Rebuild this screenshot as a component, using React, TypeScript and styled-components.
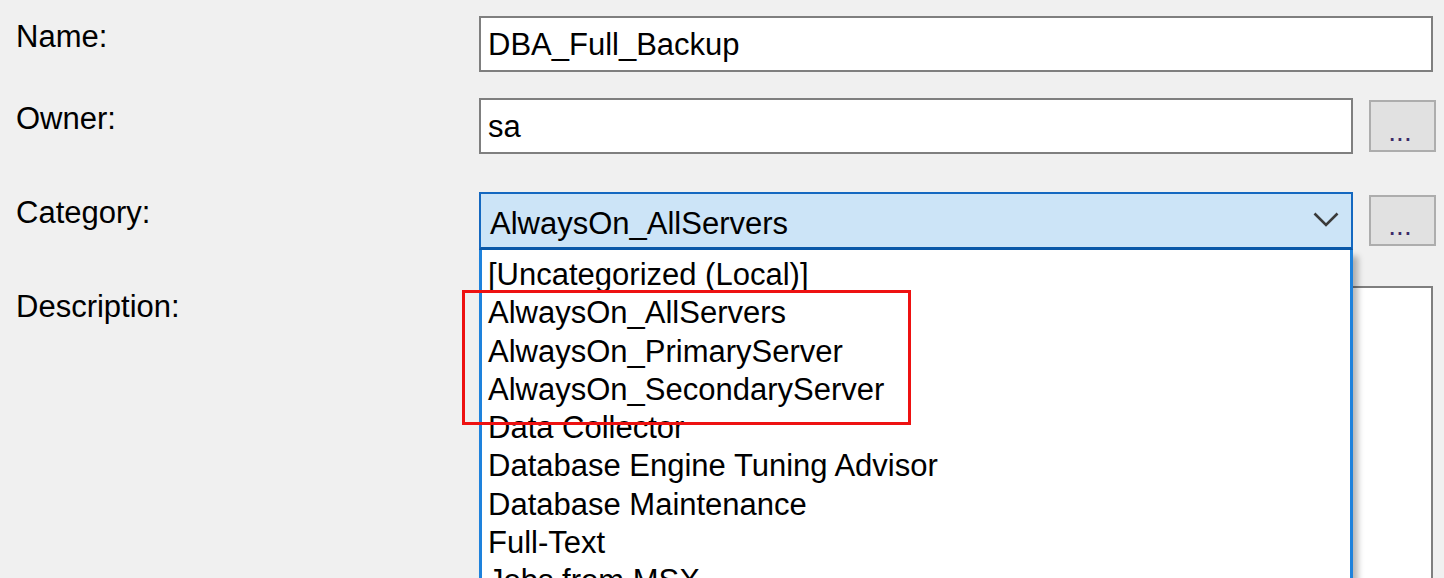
import React from "react";
import styled, { createGlobalStyle } from "styled-components";

const Global = createGlobalStyle`
  html, body {
    margin: 0;
    padding: 0;
    background: #f0f0f0;
    overflow: hidden;
  }
  body {
    font-family: "Liberation Sans", Arial, sans-serif;
    color: #000;
  }
`;

const Page = styled.div`
  width: 1444px;
  height: 578px;
  overflow: hidden;
  position: relative;
  padding-top: 16px;
  box-sizing: border-box;
  background: #f0f0f0;
`;

const Row = styled.div<{ $gap: number; $height: number }>`
  display: flex;
  align-items: flex-start;
  height: ${(p) => p.$height}px;
  margin-bottom: ${(p) => p.$gap}px;
`;

const Label = styled.div`
  width: 479px;
  flex: 0 0 479px;
  box-sizing: border-box;
  padding-left: 16px;
  padding-top: 4px;
  font-size: 31px;
  line-height: 34px;
  white-space: nowrap;
`;

const TextBox = styled.div<{ $width: number; $height: number }>`
  box-sizing: border-box;
  width: ${(p) => p.$width}px;
  height: ${(p) => p.$height}px;
  background: #fff;
  border: 2px solid #7f7f7f;
  padding-left: 7px;
  padding-top: 1px;
  font-size: 31px;
  line-height: ${(p) => p.$height - 5}px;
  white-space: nowrap;
  overflow: hidden;
`;

const ComboWrap = styled.div`
  position: relative;
  width: 874px;
  height: 58px;
`;

const Combo = styled.div`
  box-sizing: border-box;
  width: 874px;
  height: 58px;
  background: #cce4f7;
  border: 2px solid #1468c0;
  border-bottom: 3px solid #0a58a8;
  display: flex;
  align-items: center;
  justify-content: space-between;
  padding: 7px 12px 0 9px;
  font-size: 31px;
  line-height: 34px;
`;

const Chevron = styled.svg`
  width: 26px;
  height: 15px;
  margin-top: -9px;
  flex: 0 0 auto;
`;

const DropList = styled.div`
  position: absolute;
  top: 58px;
  left: 0;
  width: 874px;
  height: 380px;
  box-sizing: border-box;
  background: #fff;
  border-left: 3px solid #1e82dc;
  border-right: 3px solid #1e82dc;
  padding-top: 6px;
  box-shadow: 5px 6px 6px rgba(0, 0, 0, 0.28);
  z-index: 2;
`;

const Item = styled.div`
  padding-left: 6px;
  font-size: 31px;
  line-height: 38.3px;
  height: 38.3px;
  white-space: nowrap;
`;

const DotsButton = styled.div<{ $top: number; $height: number }>`
  box-sizing: border-box;
  margin-left: 16px;
  margin-top: ${(p) => p.$top}px;
  width: 67px;
  height: ${(p) => p.$height}px;
  background: #e1e1e1;
  border: 2px solid #adadad;
  display: flex;
  justify-content: center;
  align-items: flex-end;
  font-size: 28px;
  line-height: 30px;
  color: #3c2a68;
  padding-bottom: 3px;
  padding-right: 5px;
`;

const Highlight = styled.div`
  position: absolute;
  left: 462px;
  top: 290px;
  width: 449px;
  height: 135px;
  box-sizing: border-box;
  border: 3px solid #ee1111;
  z-index: 3;
  pointer-events: none;
`;

const items = [
  "[Uncategorized (Local)]",
  "AlwaysOn_AllServers",
  "AlwaysOn_PrimaryServer",
  "AlwaysOn_SecondaryServer",
  "Data Collector",
  "Database Engine Tuning Advisor",
  "Database Maintenance",
  "Full-Text",
  "Jobs from MSX",
];

export default function App() {
  return (
    <Page>
      <Global />
      <Row $height={56} $gap={26}>
        <Label>Name:</Label>
        <TextBox $width={954} $height={56}>DBA_Full_Backup</TextBox>
      </Row>
      <Row $height={56} $gap={38}>
        <Label>Owner:</Label>
        <TextBox $width={874} $height={56}>sa</TextBox>
        <DotsButton $top={2} $height={52}>...</DotsButton>
      </Row>
      <Row $height={58} $gap={36}>
        <Label>Category:</Label>
        <ComboWrap>
          <Combo>
            <span>AlwaysOn_AllServers</span>
            <Chevron viewBox="0 0 26 15">
              <polyline
                points="1.5,1.5 13,13 24.5,1.5"
                fill="none"
                stroke="#3a3a3a"
                strokeWidth="2.6"
              />
            </Chevron>
          </Combo>
          <DropList>
            {items.map((t) => (
              <Item key={t}>{t}</Item>
            ))}
          </DropList>
        </ComboWrap>
        <DotsButton $top={3} $height={51}>...</DotsButton>
      </Row>
      <Row $height={400} $gap={0}>
        <Label>Description:</Label>
        <TextBox $width={954} $height={400} />
      </Row>
      <Highlight />
    </Page>
  );
}
